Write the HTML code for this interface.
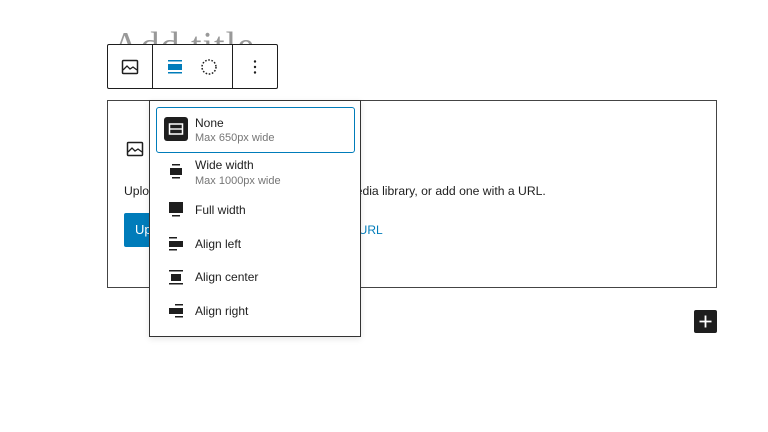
<!DOCTYPE html>
<html><head><meta charset="utf-8"><style>
*{box-sizing:border-box;margin:0;padding:0}
body{width:768px;height:432px;background:#fff;position:relative;overflow:hidden;font-family:"Liberation Sans",sans-serif;color:#1e1e1e}
.abs{position:absolute}
.tclip{left:0;top:0;width:768px;height:45px;overflow:hidden}
.title{left:112px;top:24px;font-family:"Liberation Serif",serif;font-size:38px;color:#999;letter-spacing:1px;white-space:nowrap}
.toolbar{left:107px;top:44px;width:171px;height:45px;border:1px solid #1e1e1e;background:#fff;border-radius:2px}
.block{left:107px;top:100px;width:610px;height:188px;border:1px solid #444;background:#fff}
.menu{left:149px;top:100px;width:212px;height:237px;border:1px solid #333;background:#fff;box-shadow:0 2px 6px rgba(0,0,0,.1)}
.sel{left:156px;top:107px;width:199px;height:46px;border:1.5px solid #007cba;border-radius:3px}
.lbl{font-size:12px;color:#1e1e1e}
.sub{font-size:11px;color:#757575}
</style></head><body>
<div class="abs tclip"><div class="abs title">Add title</div></div>
<div class="abs toolbar">
  <div class="abs" style="left:44px;top:-1px;width:1px;height:45px;background:#1e1e1e"></div>
  <div class="abs" style="left:124px;top:-1px;width:1px;height:45px;background:#1e1e1e"></div>
  <svg class="abs" style="left:12px;top:12px" width="20" height="20" viewBox="0 0 20 20"><rect x="2.5" y="3.5" width="15" height="13" rx="1" fill="none" stroke="#1e1e1e" stroke-width="1.5"/><path d="M3 13l4-4 3 3 3-2 4 3" fill="none" stroke="#1e1e1e" stroke-width="1.3"/></svg>
  <svg class="abs" style="left:58px;top:12px" width="18" height="20" viewBox="0 0 18 20"><rect x="2" y="3" width="14" height="1.5" fill="#007cba"/><rect x="2" y="7" width="14" height="6" fill="#007cba"/><rect x="2" y="15" width="14" height="1.5" fill="#007cba"/></svg>
  <svg class="abs" style="left:91px;top:12px" width="20" height="20" viewBox="0 0 20 20"><circle cx="10" cy="10" r="7" fill="none" stroke="#1e1e1e" stroke-width="1.5" stroke-dasharray="1.6 1.6"/></svg>
  <svg class="abs" style="left:140px;top:12px" width="20" height="20" viewBox="0 0 20 20"><circle cx="7" cy="4.5" r="1.2" fill="#1e1e1e"/><circle cx="7" cy="10" r="1.2" fill="#1e1e1e"/><circle cx="7" cy="15.5" r="1.2" fill="#1e1e1e"/></svg>
</div>
<div class="abs block">
  <svg class="abs" style="left:17px;top:38px" width="20" height="20" viewBox="0 0 20 20"><rect x="2.5" y="3.5" width="15" height="13" rx="1" fill="none" stroke="#1e1e1e" stroke-width="1.5"/><path d="M3 13l4-4 3 3 3-2 4 3" fill="none" stroke="#1e1e1e" stroke-width="1.3"/></svg>
  <div class="abs" style="left:16px;top:83px;font-size:12.2px;white-space:nowrap">Upload an image file, pick one from your media library, or add one with a URL.</div>
  <div class="abs" style="left:16px;top:112px;width:90px;height:34px;background:#007cba;border-radius:2px;color:#fff;font-size:13px;padding:9px 0 0 11px">Upload</div>
  <div class="abs" style="left:190px;top:122px;font-size:12px;color:#007cba;white-space:nowrap">Insert from URL</div>
</div>
<div class="abs menu"></div>
<div class="abs sel"></div>
<svg class="abs" style="left:164px;top:117px" width="24" height="24" viewBox="0 0 24 24"><rect width="24" height="24" rx="3" fill="#1e1e1e"/><rect x="5.5" y="7" width="13" height="10" fill="none" stroke="#fff" stroke-width="1.5"/><rect x="5" y="11.3" width="14" height="1.4" fill="#fff"/></svg>
<div class="abs lbl" style="left:195px;top:116px">None</div>
<div class="abs sub" style="left:195px;top:132px">Max 650px wide</div>
<svg class="abs" style="left:168px;top:162px" width="16" height="20" viewBox="0 0 16 20"><rect x="4" y="2" width="8" height="1.5" fill="#1e1e1e"/><rect x="2" y="6" width="12" height="7" fill="#1e1e1e"/><rect x="4" y="15" width="8" height="1.5" fill="#1e1e1e"/></svg>
<div class="abs lbl" style="left:195px;top:158px">Wide width</div>
<div class="abs sub" style="left:195px;top:175px">Max 1000px wide</div>
<svg class="abs" style="left:168px;top:201px" width="16" height="20" viewBox="0 0 16 20"><rect x="1" y="1" width="14" height="11" fill="#1e1e1e"/><rect x="4" y="14" width="8" height="1.5" fill="#1e1e1e"/></svg>
<div class="abs lbl" style="left:195px;top:203px">Full width</div>
<svg class="abs" style="left:168px;top:235px" width="16" height="20" viewBox="0 0 16 20"><rect x="1" y="2" width="8" height="1.5" fill="#1e1e1e"/><rect x="1" y="6" width="14" height="6" fill="#1e1e1e"/><rect x="1" y="14" width="8" height="1.5" fill="#1e1e1e"/></svg>
<div class="abs lbl" style="left:195px;top:237px">Align left</div>
<svg class="abs" style="left:168px;top:269px" width="16" height="20" viewBox="0 0 16 20"><rect x="1" y="1" width="14" height="1.5" fill="#1e1e1e"/><rect x="3" y="5" width="10" height="7" fill="#1e1e1e"/><rect x="1" y="14" width="14" height="1.5" fill="#1e1e1e"/></svg>
<div class="abs lbl" style="left:195px;top:270px">Align center</div>
<svg class="abs" style="left:168px;top:302px" width="16" height="20" viewBox="0 0 16 20"><rect x="7" y="2" width="8" height="1.5" fill="#1e1e1e"/><rect x="1" y="6" width="14" height="6" fill="#1e1e1e"/><rect x="7" y="14" width="8" height="1.5" fill="#1e1e1e"/></svg>
<div class="abs lbl" style="left:195px;top:304px">Align right</div>
<div class="abs" style="left:694px;top:310px;width:23px;height:23px;background:#1e1e1e;border-radius:2px"><svg width="23" height="23" viewBox="0 0 23 23"><path d="M11.5 5.5v12M5.5 11.5h12" stroke="#fff" stroke-width="1.8"/></svg></div>
</body></html>
